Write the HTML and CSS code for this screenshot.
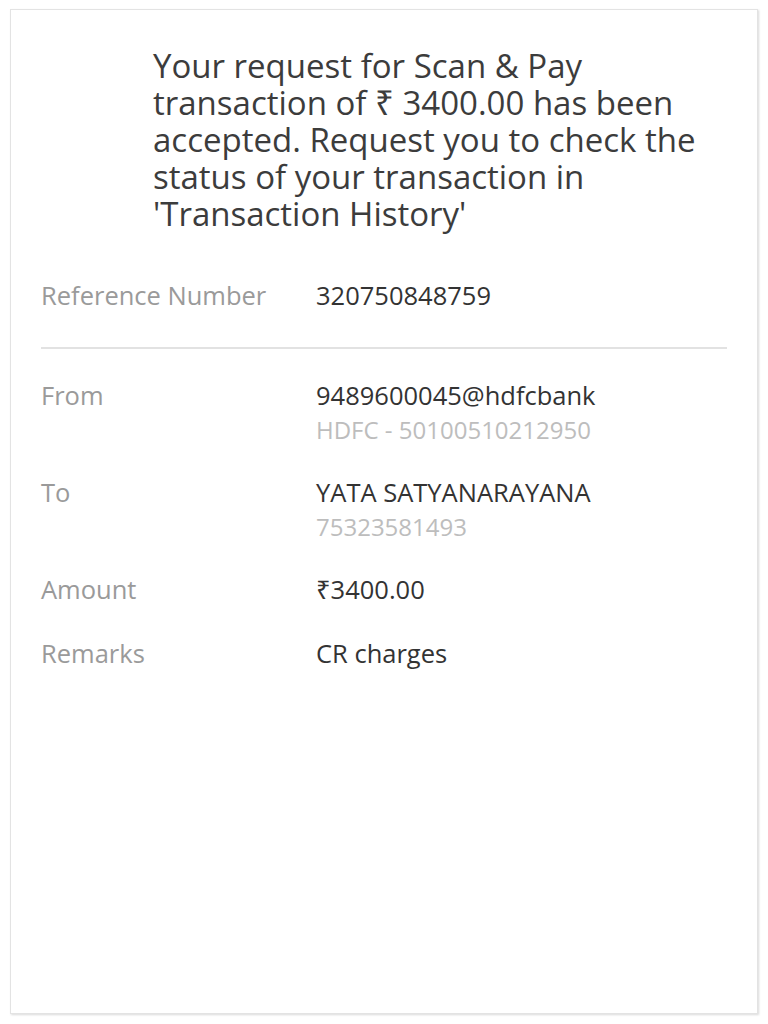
FILE: index.html
```html
<!DOCTYPE html>
<html lang="en">
<head>
    <meta charset="UTF-8">
    <meta name="viewport" content="width=device-width, initial-scale=1.0">
    <link rel="stylesheet" href="styles.css">
</head>
<body>
    <div class="card">
        <p class="message">Your request for Scan &amp; Pay transaction of ₹ 3400.00 has been accepted. Request you to check the status of your transaction in 'Transaction History'</p>

        <div class="row ref-row">
            <div class="label">Reference Number</div>
            <div class="value">320750848759</div>
        </div>

        <hr class="divider">

        <div class="row">
            <div class="label">From</div>
            <div class="value">
                9489600045@hdfcbank
                <div class="sub">HDFC - 50100510212950</div>
            </div>
        </div>
        <div class="row">
            <div class="label">To</div>
            <div class="value">
                YATA SATYANARAYANA
                <div class="sub">75323581493</div>
            </div>
        </div>
        <div class="row">
            <div class="label">Amount</div>
            <div class="value">₹3400.00</div>
        </div>
        <div class="row">
            <div class="label">Remarks</div>
            <div class="value">CR charges</div>
        </div>
    </div>
</body>
</html>
```

FILE: styles.css
```css
body {
    margin: 0;
    padding: 0;
    background-color: #fff;
    font-family: 'Open Sans', 'Noto Sans', sans-serif;
}

.card {
    margin: 9px 10px 10px 10px;
    height: 1005px;
    box-sizing: border-box;
    border: 1px solid #e3e3e3;
    box-shadow: 1px 1px 2px rgba(0, 0, 0, 0.15);
    background: #fff;
    padding: 37px 30px 0 30px;
}

.message {
    margin: 0 0 46px 112px;
    width: 570px;
    font-size: 33px;
    line-height: 37px;
    color: #3c3c3c;
}

.row {
    display: grid;
    grid-template-columns: 275px 1fr;
    font-size: 25.5px;
    line-height: 34px;
    margin-bottom: 30px;
}

.ref-row {
    margin-bottom: 35px;
}

.label {
    color: #9a9a9a;
}

.value {
    color: #333;
}

.sub {
    color: #bdbdbd;
    font-size: 24px;
    line-height: 30px;
    margin-top: 3px;
}

.divider {
    border: none;
    border-top: 2px solid #e2e2e2;
    margin: 0 0 29px 0;
}
```
